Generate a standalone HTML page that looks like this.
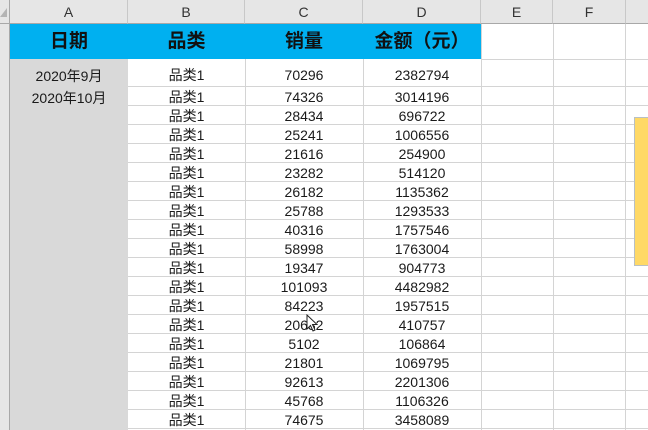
<!DOCTYPE html>
<html><head><meta charset="utf-8"><style>
*{margin:0;padding:0;box-sizing:border-box}
body{width:648px;height:430px;overflow:hidden;background:#fff;position:relative;font-family:"Liberation Sans","Noto Sans CJK SC",sans-serif;color:#1a1a1a}
.a{position:absolute}
.ch{top:0;height:24px;background:#e6e6e6;border-right:1px solid #c8c8c8;border-bottom:1px solid #a8a8a8;font-size:14px;text-align:center;line-height:24px;color:#333}
.hl{position:absolute;left:10px;width:638px;height:1px;background:#d4d4d4}
.vl{position:absolute;top:24px;width:1px;height:406px;background:#d4d4d4}
.r{position:absolute;left:128px;width:353px;height:19px;font-size:14px;line-height:19px;margin-top:1px}
.r span{position:absolute;text-align:center}
.r span:nth-child(1){left:0;width:117px}
.r span:nth-child(2){left:117px;width:118px}
.r span:nth-child(3){left:235px;width:118px}
.hd{position:absolute;top:24px;height:35px;line-height:35px;font-size:19px;font-weight:bold;text-align:center;color:#111}
</style></head><body>
<div class="a ch" style="left:0;width:10px;border-right:1px solid #a8a8a8"></div>
<div class="a" style="left:0;top:8px;width:0;height:0;border-left:7px solid transparent;border-bottom:9px solid #b4b4b4"></div>
<div class="a ch" style="left:10px;width:118px">A</div>
<div class="a ch" style="left:128px;width:117px">B</div>
<div class="a ch" style="left:245px;width:118px">C</div>
<div class="a ch" style="left:363px;width:118px">D</div>
<div class="a ch" style="left:481px;width:72px">E</div>
<div class="a ch" style="left:553px;width:73px">F</div>
<div class="a ch" style="left:626px;width:30px"></div>
<div class="a" style="left:0;top:24px;width:10px;height:406px;background:#e6e6e6;border-right:1px solid #a8a8a8"></div>

<div class="hl" style="top:86px"></div>
<div class="hl" style="top:105px"></div>
<div class="hl" style="top:124px"></div><div class="hl" style="top:143px"></div><div class="hl" style="top:162px"></div><div class="hl" style="top:181px"></div><div class="hl" style="top:200px"></div><div class="hl" style="top:219px"></div><div class="hl" style="top:238px"></div><div class="hl" style="top:257px"></div><div class="hl" style="top:276px"></div><div class="hl" style="top:295px"></div><div class="hl" style="top:314px"></div><div class="hl" style="top:333px"></div><div class="hl" style="top:352px"></div><div class="hl" style="top:371px"></div><div class="hl" style="top:390px"></div><div class="hl" style="top:409px"></div><div class="hl" style="top:428px"></div>
<div class="hl" style="top:59px;left:481px;width:167px"></div>
<div class="vl" style="left:245px"></div><div class="vl" style="left:363px"></div><div class="vl" style="left:481px"></div><div class="vl" style="left:553px"></div><div class="vl" style="left:625px"></div>

<div class="a" style="left:10px;top:24px;width:471px;height:35px;background:#00b0f0"></div>
<div class="hd" style="left:10px;width:118px">日期</div>
<div class="hd" style="left:128px;width:117px">品类</div>
<div class="hd" style="left:245px;width:118px">销量</div>
<div class="hd" style="left:363px;width:118px">金额（元）</div>

<div class="a" style="left:10px;top:59px;width:118px;height:371px;background:#d9d9d9"></div>
<div class="a" style="left:10px;top:66px;width:118px;text-align:center;font-size:14px">2020年9月</div>
<div class="a" style="left:10px;top:88px;width:118px;text-align:center;font-size:14px">2020年10月</div>

<div class="r" style="top:65px"><span>品类1</span><span>70296</span><span>2382794</span></div>
<div class="r" style="top:87px"><span>品类1</span><span>74326</span><span>3014196</span></div>
<div class="r" style="top:106px"><span>品类1</span><span>28434</span><span>696722</span></div>
<div class="r" style="top:125px"><span>品类1</span><span>25241</span><span>1006556</span></div>
<div class="r" style="top:144px"><span>品类1</span><span>21616</span><span>254900</span></div>
<div class="r" style="top:163px"><span>品类1</span><span>23282</span><span>514120</span></div>
<div class="r" style="top:182px"><span>品类1</span><span>26182</span><span>1135362</span></div>
<div class="r" style="top:201px"><span>品类1</span><span>25788</span><span>1293533</span></div>
<div class="r" style="top:220px"><span>品类1</span><span>40316</span><span>1757546</span></div>
<div class="r" style="top:239px"><span>品类1</span><span>58998</span><span>1763004</span></div>
<div class="r" style="top:258px"><span>品类1</span><span>19347</span><span>904773</span></div>
<div class="r" style="top:277px"><span>品类1</span><span>101093</span><span>4482982</span></div>
<div class="r" style="top:296px"><span>品类1</span><span>84223</span><span>1957515</span></div>
<div class="r" style="top:315px"><span>品类1</span><span>20632</span><span>410757</span></div>
<div class="r" style="top:334px"><span>品类1</span><span>5102</span><span>106864</span></div>
<div class="r" style="top:353px"><span>品类1</span><span>21801</span><span>1069795</span></div>
<div class="r" style="top:372px"><span>品类1</span><span>92613</span><span>2201306</span></div>
<div class="r" style="top:391px"><span>品类1</span><span>45768</span><span>1106326</span></div>
<div class="r" style="top:410px"><span>品类1</span><span>74675</span><span>3458089</span></div>

<div class="a" style="left:634px;top:117px;width:20px;height:149px;background:#ffd966;border:1px solid #b8c0c4"></div>

<svg class="a" style="left:306px;top:314px" width="14" height="20" viewBox="0 0 14 20"><path d="M1 1 L1 15 L4.5 11.5 L7 17 L9 16 L6.5 10.5 L11 10.5 Z" fill="#fff" stroke="#222" stroke-width="1"/></svg>
</body></html>
